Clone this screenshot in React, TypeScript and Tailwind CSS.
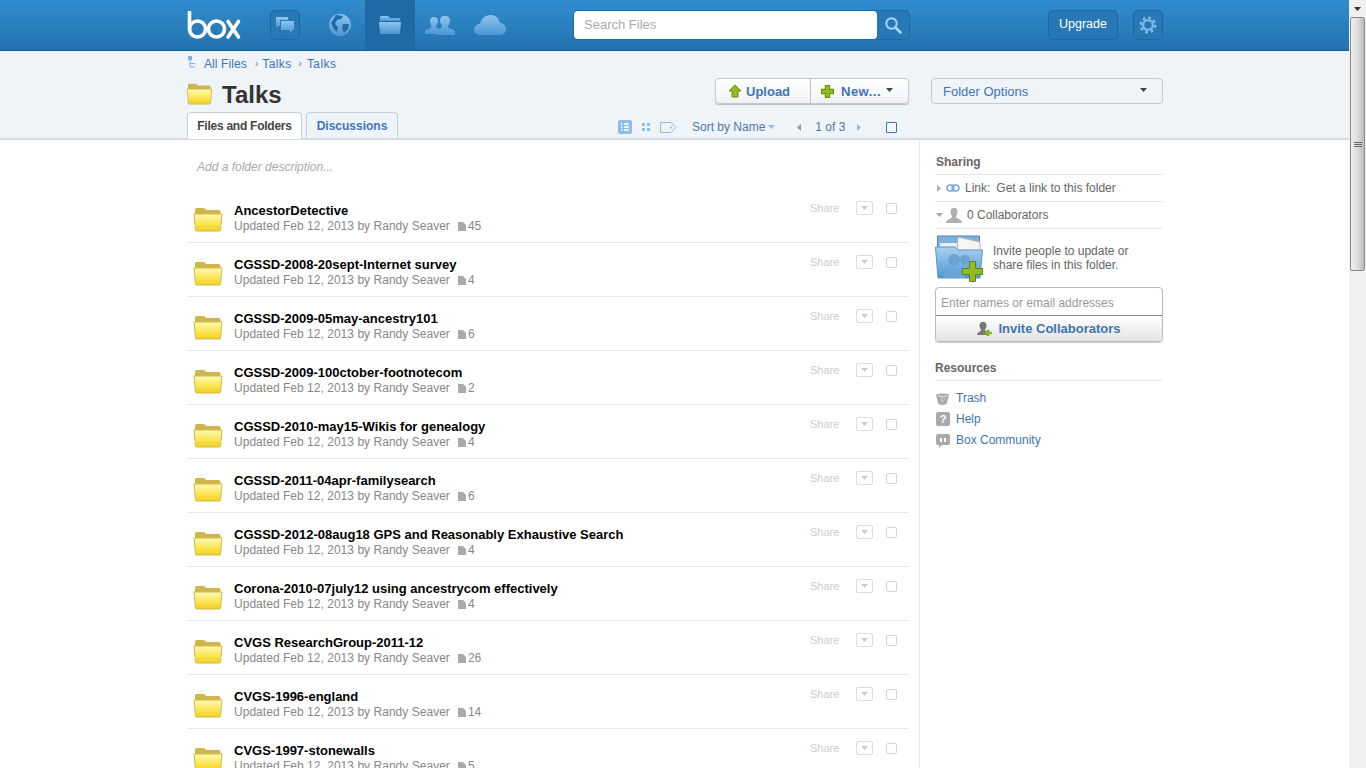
import React from 'react';

const rows = [
  { name: 'AncestorDetective', count: 45 },
  { name: 'CGSSD-2008-20sept-Internet survey', count: 4 },
  { name: 'CGSSD-2009-05may-ancestry101', count: 6 },
  { name: 'CGSSD-2009-100ctober-footnotecom', count: 2 },
  { name: 'CGSSD-2010-may15-Wikis for genealogy', count: 4 },
  { name: 'CGSSD-2011-04apr-familysearch', count: 6 },
  { name: 'CGSSD-2012-08aug18 GPS and Reasonably Exhaustive Search', count: 4 },
  { name: 'Corona-2010-07july12 using ancestrycom effectively', count: 4 },
  { name: 'CVGS ResearchGroup-2011-12', count: 26 },
  { name: 'CVGS-1996-england', count: 14 },
  { name: 'CVGS-1997-stonewalls', count: 5 },
];

function Defs() {
  return (
    <svg width="0" height="0" className="absolute">
      <defs>
        <linearGradient id="nav" x1="0" y1="0" x2="0" y2="1">
          <stop offset="0" stopColor="#8ec4ee" />
          <stop offset="1" stopColor="#4c96d3" />
        </linearGradient>
        <linearGradient id="fold" x1="0" y1="0" x2="0" y2="1">
          <stop offset="0" stopColor="#fff9b8" />
          <stop offset="0.5" stopColor="#fde85e" />
          <stop offset="1" stopColor="#f2cf20" />
        </linearGradient>
        <linearGradient id="invite" x1="0" y1="0" x2="0" y2="1">
          <stop offset="0" stopColor="#a9d0f0" />
          <stop offset="1" stopColor="#4f97d6" />
        </linearGradient>
      </defs>
    </svg>
  );
}

function Folder({ w = 30, h = 26 }: { w?: number; h?: number }) {
  return (
    <svg width={w} height={h} viewBox="0 0 30 26">
      <path d="M2 3.5 Q2 2 3.5 2 H11 L13 4 H26 Q27.5 4 27.5 5.5 V9 H2 Z" fill="#cdb64b" />
      <path d="M1 8 H29 L27.5 24 Q27.4 25 26.4 25 H3.6 Q2.6 25 2.5 24 Z" fill="url(#fold)" stroke="#d2b94e" strokeWidth="1" />
    </svg>
  );
}

function Logo() {
  return (
    <svg width="54" height="30" viewBox="0 0 54 30" fill="none" stroke="#fff" strokeWidth="3.6">
      <path d="M2.5 1 V18" strokeLinecap="round" />
      <circle cx="10.5" cy="18" r="8" />
      <circle cx="29.5" cy="18" r="8" />
      <path d="M41 10.5 L51.5 26 M51.5 10.5 L41 26" strokeLinecap="round" />
    </svg>
  );
}

function Chat() {
  return (
    <svg width="20" height="18" viewBox="0 0 20 18" fill="url(#nav)">
      <path d="M1 1 H13 V4 H5 V10 H3 L1 12 Z" />
      <path d="M6 5 H19 V14 H17 V17 L13.5 14 H6 Z" />
    </svg>
  );
}

function Globe() {
  return (
    <svg width="24" height="24" viewBox="0 0 24 24">
      <circle cx="12" cy="12" r="11" fill="url(#nav)" />
      <path d="M8 2 L15 3 L13 6 L9 7 L7 11 L10 14 L9 19 L6 16 L3 10 Z M15 11 L21 11 L20 16 L16 20 L14 15 Z" fill="#1f6ba8" />
    </svg>
  );
}

function NavFolder() {
  return (
    <svg width="24" height="20" viewBox="0 0 24 20" fill="url(#nav)">
      <path d="M2 2 Q2 1 3 1 H10 L12 3 H21 Q22 3 22 4 V6 H2 Z" />
      <path d="M1 7 H23 L22 18 Q22 19 21 19 H3 Q2 19 2 18 Z" />
    </svg>
  );
}

function People() {
  return (
    <svg width="30" height="21" viewBox="0 0 30 21" fill="url(#nav)">
      <path d="M9 2 C12 2 13 4 13 6 C13 9 11 10 11 11.5 C11 13 13 13 14 14 L12 19 H0 V16.5 C0 14 6 14 6.5 11.5 C6.5 10 5 9 5 6 C5 4 6 2 9 2 Z" />
      <path d="M20 1 C24 1 25 3 25 6 C25 9 23 10 23 11.5 C23 14 30 14 30 17 V20 H12 V17 C12 14 17 14 17 11.5 C17 10 15 9 15 6 C15 3 16 1 20 1 Z" />
    </svg>
  );
}

function Cloud() {
  return (
    <svg width="32" height="22" viewBox="0 0 32 22" fill="url(#nav)">
      <path d="M7 21 C2 21 0 18 0 15.5 C0 12 3 10 6 10 C7 5 11 1 17 1 C22 1 25 5 26 9 C29 9 32 12 32 15 C32 19 29 21 26 21 Z" />
    </svg>
  );
}

function Gear() {
  return (
    <svg width="18" height="18" viewBox="0 0 20 20" fill="none">
      <circle cx="10" cy="10" r="5.5" strokeWidth="2.6" stroke="#7db8e8" />
      <circle cx="10" cy="10" r="8" strokeWidth="3" strokeDasharray="3.1 3.18" stroke="#7db8e8" />
    </svg>
  );
}

function Search() {
  return (
    <svg width="18" height="18" viewBox="0 0 18 18" fill="none">
      <circle cx="7.5" cy="7.5" r="5.2" stroke="#a8d3f2" strokeWidth="2" />
      <path d="M11.5 11.5 L16.5 16.5" stroke="#a8d3f2" strokeWidth="2.6" strokeLinecap="round" />
    </svg>
  );
}

function Caret({ color = '#444' }: { color?: string }) {
  return (
    <svg width="7" height="4" viewBox="0 0 7 4">
      <path d="M0 0 H7 L3.5 4 Z" fill={color} />
    </svg>
  );
}

function Row({ name, count }: { name: string; count: number }) {
  return (
    <div className="flex h-[54px] border-b border-[#e8e8e8] pl-[6px] pr-[12px]">
      <div className="mt-[17px] w-[41px] shrink-0">
        <Folder />
      </div>
      <div className="mt-[14px] min-w-0 flex-1">
        <div className="text-[13px] font-bold leading-[15px] text-black">{name}</div>
        <div className="flex items-center text-[12px] leading-[16px] tracking-[0.03px] text-[#888]">
          <span>Updated Feb 12, 2013 by Randy Seaver</span>
          <svg width="8" height="9" viewBox="0 0 8 9" className="ml-[8px] mr-[2px]">
            <path d="M0 0 H5 L8 3 V9 H0 Z" fill="#aaa" />
          </svg>
          <span>{count}</span>
        </div>
      </div>
      <div className="mt-[12px] flex h-[14px] items-center">
        <span className="w-[46px] text-[11px] text-[#ccc]">Share</span>
        <span className="flex h-[14px] w-[17px] items-center justify-center rounded-[2px] border border-[#ddd]">
          <Caret color="#ccc" />
        </span>
        <span className="ml-[13px] h-[11px] w-[11px] rounded-[2px] border border-[#d5d5d5]" />
      </div>
    </div>
  );
}

export default function App() {
  return (
    <div className="flex h-screen overflow-hidden bg-white font-['Liberation_Sans',Arial,sans-serif] text-[12px]">
      <Defs />
      <div className="h-full w-[1349px] shrink-0 overflow-hidden">
        {/* top bar */}
        <header className="flex h-[51px] border-b border-[#125f9c] bg-gradient-to-b from-[#318dce] to-[#2372ae] pl-[187px]">
          <div className="mt-[11px] w-[83px] shrink-0">
            <Logo />
          </div>
          <div className="mt-[10px] flex h-[30px] w-[30px] items-center justify-center rounded-[5px] border border-[#1a69a8] bg-[#2878b6]">
            <Chat />
          </div>
          <div className="flex w-[65px] shrink-0 items-center justify-center pl-[15px]">
            <Globe />
          </div>
          <div className="flex h-[50px] w-[50px] items-center justify-center bg-[#1f69a5]">
            <NavFolder />
          </div>
          <div className="flex w-[50px] items-center justify-center"><People /></div>
          <div className="flex w-[50px] items-center justify-center"><Cloud /></div>
          <div className="ml-[58px] mt-[10px] flex h-[30px] w-[337px] rounded-[5px] border border-[#1a69a8] bg-[#2878b6]">
            <div className="flex w-[303px] items-center rounded-[4px] bg-white pl-[10px] text-[13px] text-[#aaa]">Search Files</div>
            <div className="flex flex-1 items-center justify-center"><Search /></div>
          </div>
          <div className="ml-[138px] mt-[10px] flex h-[30px] w-[70px] items-center justify-center rounded-[5px] border border-[#1a69a8] bg-[#2878b6] pb-[1px] text-[12.5px] text-white">
            Upgrade
          </div>
          <div className="ml-[15px] mt-[10px] flex h-[30px] w-[30px] items-center justify-center rounded-[5px] border border-[#1a69a8] bg-[#2878b6]">
            <Gear />
          </div>
        </header>

        {/* folder header */}
        <div className="h-[89px] border-b-2 border-[#d8dcdf] bg-[#eff4f9] pl-[187px]">
          <div className="flex h-[21px] items-center pt-[4px] text-[12px] text-[#3f74ae]">
            <svg width="9" height="13" viewBox="0 0 9 13" className="mr-[8px] -mt-[3px]">
              <path d="M1 0 H5 V4 H1 Z" fill="#7fb0dc" />
              <path d="M3 4 V11 H8 M3 7.5 H8" stroke="#7fb0dc" strokeWidth="1" fill="none" />
            </svg>
            <span className="tracking-[0.1px]">All Files</span>
            <span className="ml-[8px] mr-[4px] text-[10px] text-[#777]">›</span>
            <span className="tracking-[0.4px]">Talks</span>
            <span className="ml-[7px] mr-[5px] text-[10px] text-[#777]">›</span>
            <span className="tracking-[0.4px]">Talks</span>
          </div>
          <div className="flex h-[40px]">
            <div className="-ml-[1px] mt-[10px] w-[36px]"><Folder w={27} h={23} /></div>
            <h1 className="mt-[7px] w-[493px] text-[24px] font-bold leading-[32px] text-[#333]">Talks</h1>
            <div className="mt-[6px] flex h-[26px] w-[194px] rounded-[4px] border border-[#c8c8c8] bg-gradient-to-b from-white to-[#f0f3f6] text-[13px] font-bold text-[#3f74b8] shadow-[0_1px_1px_#bbb]">
              <div className="flex w-[95px] items-center gap-[4px] border-r border-[#c0c0c0] pl-[12px] pt-[1px]">
                <svg width="14" height="14" viewBox="0 0 14 14" className="-mt-[1px]"><path d="M7 1 L13 7 H10 V13 H4 V7 H1 Z" fill="#94bb1e" stroke="#6a8f10" /></svg>
                Upload
              </div>
              <div className="flex flex-1 items-center pl-[10px] pt-[1px] tracking-[0.5px]">
                <svg width="13" height="13" viewBox="0 0 12 12" className="-mt-[1px] mr-[7px]"><path d="M4 0.5 H8 V4 H11.5 V8 H8 V11.5 H4 V8 H0.5 V4 H4 Z" fill="#94bb1e" stroke="#6a8f10" /></svg>
                New...
                <span className="ml-[5px] mb-[3px]"><Caret /></span>
              </div>
            </div>
            <div className="ml-[22px] mt-[6px] flex h-[26px] w-[232px] items-center justify-between rounded-[4px] border border-[#c8c8c8] pl-[11px] pr-[15px] pt-[1px] text-[13px] text-[#3f74b8]">
              Folder Options
              <span className="mb-[3px]"><Caret /></span>
            </div>
          </div>
          <div className="flex h-[26px]">
            <div className="flex h-[27px] w-[115px] items-center justify-center rounded-t-[4px] border border-b-0 border-[#c6d0da] bg-white text-[12px] font-bold tracking-[-0.25px] text-[#444]">
              Files and Folders
            </div>
            <div className="ml-[4px] flex h-[26px] w-[92px] items-center justify-center rounded-t-[4px] border border-b-0 border-[#c6d0da] text-[12px] font-bold text-[#3f74b8]">
              Discussions
            </div>
            <div className="ml-[220px] flex items-center pt-[4px] text-[12px] text-[#4b79ad]">
              <svg width="14" height="14" viewBox="0 0 14 14"><rect width="14" height="14" rx="2" fill="#8fbde6" /><path d="M3 4 H4.5 M6 4 H11 M3 7 H4.5 M6 7 H11 M3 10 H4.5 M6 10 H11" stroke="#fff" strokeWidth="1.4" /></svg>
              <svg width="8" height="8" viewBox="0 0 8 8" className="ml-[10px]"><path d="M0 0 H3 V3 H0 Z M5 0 H8 V3 H5 Z M0 5 H3 V8 H0 Z M5 5 H8 V8 H5 Z" fill="#8fbde6" /></svg>
              <svg width="17" height="11" viewBox="0 0 17 11" className="ml-[10px]"><path d="M0.5 0.5 H11 L16 5.5 L11 10.5 H0.5 Z" fill="none" stroke="#8fbde6" /><circle cx="11" cy="5.5" r="1" fill="#8fbde6" /></svg>
              <span className="ml-[15px]">Sort by Name</span>
              <span className="ml-[3px]"><Caret color="#8fbde6" /></span>
              <svg width="4" height="7" viewBox="0 0 4 7" className="ml-[22px]"><path d="M4 0 V7 L0 3.5 Z" fill="#999" /></svg>
              <span className="ml-[14px]">1 of 3</span>
              <svg width="4" height="7" viewBox="0 0 4 7" className="ml-[12px]"><path d="M0 0 V7 L4 3.5 Z" fill="#8fbde6" /></svg>
              <span className="ml-[25px] h-[11px] w-[11px] rounded-[1px] border border-[#3f74ae] bg-[#f4f8fb]" />
            </div>
          </div>
        </div>

        {/* list and sidebar */}
        <div className="flex pl-[187px]">
          <main className="w-[722px] shrink-0">
            <div className="h-[49px] pl-[10px] pt-[20px] text-[12px] italic leading-[14px] text-[#aaa]">Add a folder description...</div>
            {rows.map((r) => (
              <Row key={r.name} name={r.name} count={r.count} />
            ))}
          </main>
          <aside className="ml-[10px] h-[640px] w-[244px] shrink-0 border-l border-[#e6e6e6] pl-[15px] pt-[15px] text-[12px] text-[#666]">
            <div className="h-[20px] border-b border-[#e6e6e6] pl-[1px] font-bold leading-[14px]">Sharing</div>
            <div className="flex h-[27px] items-center border-b border-[#e6e6e6] pl-[2px]">
              <svg width="4" height="7" viewBox="0 0 4 7"><path d="M0 0 V7 L4 3.5 Z" fill="#aaa" /></svg>
              <svg width="14" height="8" viewBox="0 0 14 8" className="ml-[5px]" fill="none" stroke="#7fa9d2" strokeWidth="1.5"><rect x="1" y="1" width="7" height="6" rx="3" /><rect x="6" y="1" width="7" height="6" rx="3" /></svg>
              <span className="ml-[5px]">Link:</span>
              <span className="ml-[6px]">Get a link to this folder</span>
            </div>
            <div className="flex h-[27px] items-center border-b border-[#e6e6e6] pl-[1px]">
              <Caret color="#aaa" />
              <svg width="16" height="15" viewBox="0 0 16 15" className="ml-[3px]"><path d="M8 0 C11 0 11.5 2 11.5 4 C11.5 6.5 10 7.5 10 9 C10 10.5 16 11 16 15 H0 C0 11 6 10.5 6 9 C6 7.5 4.5 6.5 4.5 4 C4.5 2 5 0 8 0 Z" fill="#b0b0b0" /></svg>
              <span className="ml-[5px]">0 Collaborators</span>
            </div>
            <div className="flex h-[58px] items-center">
              <svg width="48" height="47" viewBox="0 0 48 47" className="mt-[1px] shrink-0">
                <path d="M2.5 1 H44.5 V16 H2.5 Z" fill="#7fb0dc" stroke="#4d87bd" />
                <path d="M5 8 H22 V14 H5 Z" fill="#e8f0f6" />
                <path d="M23 2 L45 7 V16 H22 Z" fill="#f5f5f5" stroke="#b5b5b5" />
                <path d="M0.5 12 H20 L23 15 H47.5 L45 43 H3 Z" fill="url(#invite)" stroke="#5a94c8" />
                <circle cx="19" cy="25" r="6" fill="#6ea3d4" />
                <path d="M8 43 C8 33 30 33 30 43 Z" fill="#6ea3d4" />
                <circle cx="30" cy="25" r="5" fill="#6ea3d4" />
                <path d="M34.5 26.5 H40.5 V33.5 H47.5 V39.5 H40.5 V46.5 H34.5 V39.5 H27.5 V33.5 H34.5 Z" fill="#94bb1e" stroke="#5f8510" />
              </svg>
              <div className="ml-[10px] leading-[14px]">
                <div>Invite people to update or</div>
                <div>share files in this folder.</div>
              </div>
            </div>
            <div className="h-[55px] rounded-[4px] border border-[#bbb] shadow-[0_1px_1px_#ccc]">
              <div className="flex h-[28px] items-center border-b border-[#888] pl-[5px] pt-[3px] text-[#999]">Enter names or email addresses</div>
              <div className="flex h-[25px] items-center justify-center rounded-b-[4px] bg-gradient-to-b from-white to-[#e4e4e4] text-[13px] font-bold text-[#3f74ae]">
                <svg width="16" height="14" viewBox="0 0 16 14" className="mr-[5px]">
                  <path d="M6 0 C9 0 9.5 2 9.5 4 C9.5 6 8 7 8 8 C8 9 10 9.5 11 10 V13 H0 C0 10 4 9.5 4 8 C4 7 2.5 6 2.5 4 C2.5 2 3 0 6 0 Z" fill="#777" />
                  <path d="M10 8 H12 V10 H14.5 V12 H12 V14 H10 V12 H8 V10 H10 Z" fill="#94bb1e" stroke="#6a8f10" strokeWidth="0.5" />
                </svg>
                Invite Collaborators
              </div>
            </div>
            <div className="mt-[19px] h-[20px] border-b border-[#e6e6e6] font-bold leading-[14px]">Resources</div>
            <div className="mt-[10px] space-y-[7px] text-[#3f74ae]">
              <div className="flex h-[14px] items-center pl-[1px]">
                <svg width="13" height="13" viewBox="0 0 13 13">
                  <path d="M0 3 C0 1 13 1 13 3 L11 11 C10.5 13.5 2.5 13.5 2 11 Z" fill="#aaa" />
                  <path d="M1.5 3.5 C4 5 9 5 11.5 3.5" stroke="#e4e4e4" fill="none" />
                  <path d="M4 7 H5 M6 7 H7 M8 7 H9 M5 9 H6 M7 9 H8" stroke="#ddd" />
                </svg>
                <span className="ml-[7px]">Trash</span>
              </div>
              <div className="flex h-[14px] items-center pl-[1px]">
                <span className="flex h-[14px] w-[14px] items-center justify-center rounded-[2px] bg-[#aaa] text-[11px] font-bold text-white">?</span>
                <span className="ml-[6px]">Help</span>
              </div>
              <div className="flex h-[14px] items-center pl-[1px]">
                <svg width="14" height="15" viewBox="0 0 14 15"><path d="M2 1 H12 Q14 1 14 3 V10 Q14 12 12 12 H6 L3 15 V12 H2 Q0 12 0 10 V3 Q0 1 2 1 Z" fill="#aaa" /><path d="M4 5 H6 V9 H4 Z M8 5 H10 V9 H8 Z" fill="#fff" /></svg>
                <span className="ml-[6px]">Box Community</span>
              </div>
            </div>
          </aside>
        </div>
      </div>

      {/* window scrollbar */}
      <div className="flex h-full w-[17px] shrink-0 flex-col items-center bg-[#f0f0f0]">
        <div className="flex h-[17px] items-center justify-center"><Caret color="#333" /></div>
        <div className="flex h-[254px] w-[15px] items-center justify-center rounded-[2px] border border-[#8a8a8a] bg-gradient-to-r from-[#eee] via-[#ddd] to-[#bbb]">
          <div className="flex w-[8px] flex-col gap-[1px]">
            <div className="h-[1px] bg-[#666]" />
            <div className="h-[1px] bg-[#666]" />
            <div className="h-[1px] bg-[#666]" />
          </div>
        </div>
      </div>
    </div>
  );
}
